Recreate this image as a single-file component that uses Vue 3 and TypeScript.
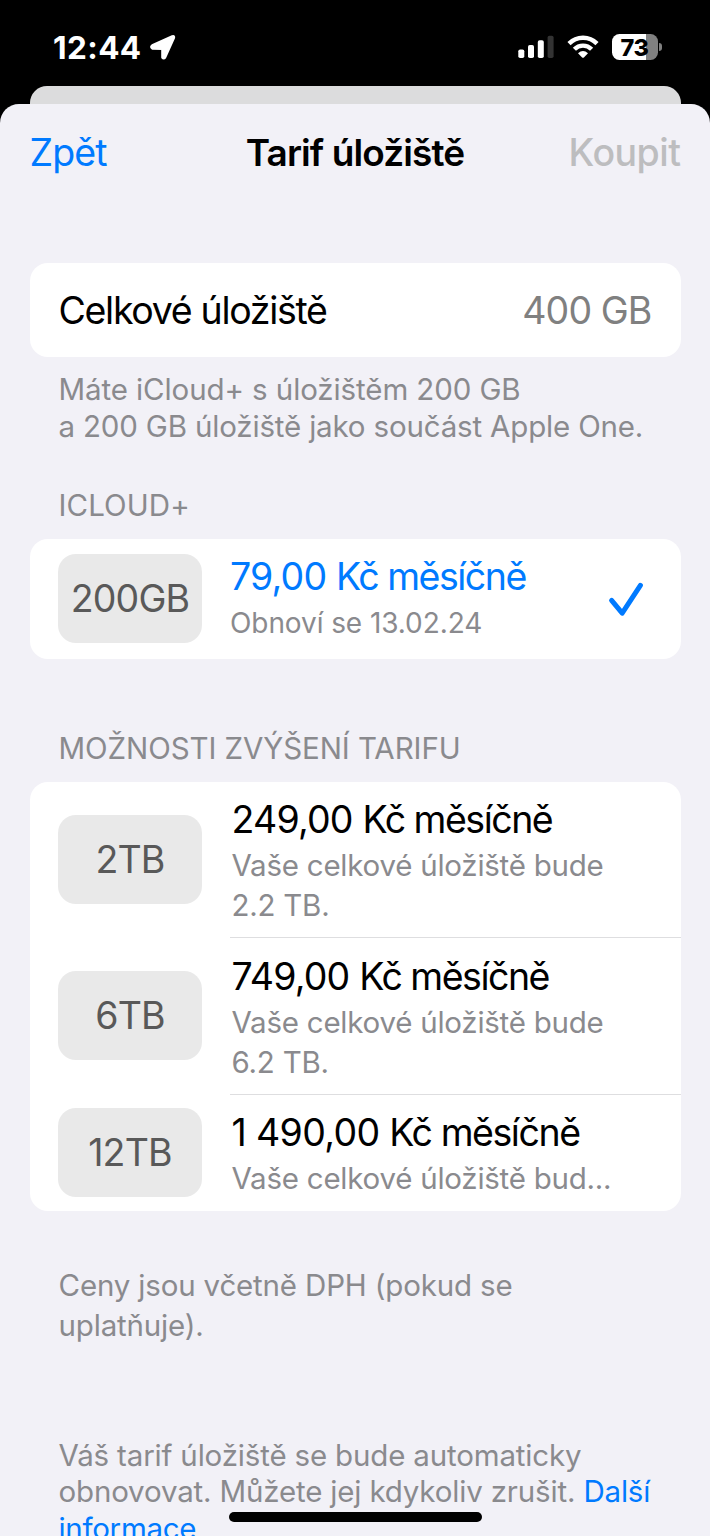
<script setup lang="ts">
interface Plan {
  id: string
  size: string
  amount: string
  lines: string[]
}

const plans: Plan[] = [
  { id: 'tb2', size: '2TB', amount: '249,00', lines: ['Vaše celkové úložiště bude', '2.2 TB.'] },
  { id: 'tb6', size: '6TB', amount: '749,00', lines: ['Vaše celkové úložiště bude', '6.2 TB.'] },
  { id: 'tb12', size: '12TB', amount: '1 490,00', lines: ['Vaše celkové úložiště bud...'] },
]
</script>

<template>
  <div class="screen">
    <div class="status">
      <div class="status-left">
        <span class="time">12:44</span>
        <svg class="location" width="28" height="28" viewBox="0 0 28 28">
          <path d="M3.2 12.2 L23.2 3.2 Q25.9 2.4 25 5.2 L16.2 24.6 Q14.7 26.6 13.2 24.6 L13.2 16 L3.4 15.8 Q0.8 14 3.2 12.2Z" fill="#fff" stroke="#fff" stroke-width="2" stroke-linejoin="round" />
        </svg>
      </div>
      <div class="status-right">
        <svg class="signal" width="36" height="24" viewBox="0 0 36 24">
          <rect x="0.3" y="14.5" width="6" height="8.5" rx="1.8" fill="#fff" />
          <rect x="10" y="10" width="6" height="13" rx="1.8" fill="#fff" />
          <rect x="19.8" y="5.3" width="6" height="17.7" rx="1.8" fill="#fff" />
          <rect x="29.6" y="0.7" width="6" height="22.3" rx="1.8" fill="#333" />
        </svg>
        <svg class="wifi" width="32" height="24" viewBox="0 0 32 24">
          <g fill="none" stroke="#fff" stroke-width="4.4">
            <path d="M2 8.6 A19.6 19.6 0 0 1 30 8.6" />
            <path d="M7.4 14.3 A12 12 0 0 1 24.6 14.3" />
          </g>
          <path d="M11 18.2 Q16 13.8 21 18.2 L16.9 22.5 Q16 23.2 15.1 22.5Z" fill="#fff" />
        </svg>
        <div class="battery">
          <div class="battery-body"><span>73</span></div>
          <div class="battery-cap"></div>
        </div>
      </div>
    </div>

    <div class="back-sheet"></div>

    <main class="sheet">
      <header class="nav">
        <span class="nav-back">Zpět</span>
        <h1 class="nav-title">Tarif úložiště</h1>
        <span class="nav-buy">Koupit</span>
      </header>

      <section class="card total">
        <span class="total-label">Celkové úložiště</span>
        <span class="total-value">400 GB</span>
      </section>

      <p class="note total-note">
        <span class="t-mate">Máte iCloud+ s úložištěm 200 GB</span>
        <span>a 200 GB úložiště jako součást Apple One.</span>
      </p>

      <h2 class="group-title icloud-title">ICLOUD+</h2>
      <section class="card current">
        <div class="chip">200GB</div>
        <div class="current-text">
          <div class="price current-price">79,00 <span class="unit">Kč měsíčně</span></div>
          <div class="renew">Obnoví se 13.02.24</div>
        </div>
        <svg class="check" width="36" height="36" viewBox="0 0 36 36">
          <path d="M3.6 19.4 L14.2 32.2 L32.4 4.4" fill="none" stroke="#007aff" stroke-width="5" stroke-linecap="round" stroke-linejoin="round" />
        </svg>
      </section>

      <h2 class="group-title upgrade-title">MOŽNOSTI ZVÝŠENÍ TARIFU</h2>
      <section class="card plans">
        <div v-for="plan in plans" :key="plan.id" class="plan" :class="plan.id">
          <div class="chip">{{ plan.size }}</div>
          <div class="plan-text">
            <div class="price">{{ plan.amount }} <span class="unit">Kč měsíčně</span></div>
            <div v-for="line in plan.lines" :key="line" class="plan-line">{{ line }}</div>
          </div>
        </div>
      </section>

      <p class="note vat">
        <span>Ceny jsou včetně DPH (pokud se</span>
        <span>uplatňuje).</span>
      </p>

      <p class="note renewal">
        <span>Váš tarif úložiště se bude automaticky</span>
        <span>obnovovat. Můžete jej kdykoliv zrušit. <a>Další</a></span>
        <span class="t-info"><a>informace</a></span>
      </p>
    </main>

    <div class="home-bar"></div>
  </div>
</template>

<style>
html,
body {
  margin: 0;
  background: #000;
  overflow: hidden;
}
</style>

<style scoped>
* {
  box-sizing: border-box;
}

.screen {
  position: relative;
  width: 710px;
  height: 1536px;
  overflow: hidden;
  background: #000;
  font-family: Inter, "Liberation Sans", sans-serif;
  font-size: 37.5px;
  color: #000;
  display: flex;
  flex-direction: column;
}

.status {
  flex: none;
  height: 85.5px;
  padding: 0 48px 0 53px;
  display: flex;
  justify-content: space-between;
  color: #fff;
}

.status-left,
.status-right {
  display: flex;
  align-items: center;
  height: 94px;
}

.time {
  font-size: 31.5px;
  font-weight: 700;
  letter-spacing: 0.4px;
}

.location {
  margin-left: 7.5px;
}

.wifi {
  margin-left: 13px;
}

.battery {
  display: flex;
  align-items: center;
  margin-left: 13px;
}

.battery-body {
  width: 46px;
  height: 26px;
  border-radius: 7.5px;
  background: linear-gradient(to right, #fff 34px, #808080 34px);
  color: #000;
  font-size: 23.5px;
  font-weight: 800;
  letter-spacing: -0.4px;
  line-height: 27px;
  padding-right: 1px;
  text-align: center;
}

.battery-cap {
  width: 3px;
  height: 8px;
  margin-left: 1px;
  border-radius: 0 3px 3px 0;
  background: #808080;
}

.back-sheet {
  flex: none;
  height: 18px;
  margin: 0 29.5px;
  border-radius: 17px 17px 0 0;
  background: #dcdcdd;
}

.sheet {
  flex: 1;
  background: #f2f1f7;
  border-radius: 19px 19px 0 0;
  padding: 0 29.5px;
}

.nav {
  display: grid;
  grid-template-columns: 1fr auto 1fr;
  align-items: center;
  height: 97px;
}

.nav-title {
  margin: 0;
  font-size: 37px;
  font-weight: 600;
  letter-spacing: -0.9px;
}

.nav-back {
  color: #007aff;
  letter-spacing: -0.9px;
}

.nav-buy {
  color: #bdbdbf;
  font-weight: 500;
  letter-spacing: -0.5px;
  text-align: right;
}

.card {
  background: #fff;
  border-radius: 18px;
}

.total {
  margin-top: 62px;
  height: 94px;
  padding: 2px 29px 0;
  display: flex;
  align-items: center;
  justify-content: space-between;
}

.total-label {
  letter-spacing: -1.32px;
}

.total-value {
  color: #808080;
  letter-spacing: -0.9px;
}

.note {
  margin: 0;
  padding-left: 29px;
  font-size: 29.5px;
  letter-spacing: -0.17px;
  color: #8a8a8e;
  white-space: nowrap;
}

.note span {
  display: block;
  line-height: 36.4px;
}

.total-note {
  margin-top: 14.8px;
}

.t-mate {
  letter-spacing: -0.1px;
}

.t-info {
  letter-spacing: -0.3px;
}

.group-title {
  margin: 0;
  padding-left: 29px;
  font-size: 29.5px;
  font-weight: 400;
  line-height: 36px;
  letter-spacing: -0.08px;
  color: #8a8a8e;
}

.icloud-title {
  margin-top: 42.9px;
  letter-spacing: 0.1px;
}

.current {
  margin-top: 16px;
  height: 119.5px;
  padding: 0 37px 0 28.5px;
  display: flex;
  align-items: center;
}

.chip {
  flex: none;
  width: 144px;
  height: 89px;
  border-radius: 18px;
  background: #e9e9e9;
  color: #595959;
  font-size: 37.5px;
  letter-spacing: -0.8px;
  line-height: 90px;
  text-align: center;
}

.current .chip {
  margin-top: -1px;
}

.current-text {
  flex: 1;
  padding: 1.5px 0 0 28px;
}

.price {
  line-height: 46px;
  letter-spacing: -0.8px;
  white-space: nowrap;
}

.unit {
  letter-spacing: -1.5px;
}

.current-price {
  color: #007aff;
}

.renew {
  font-size: 28px;
  line-height: 46px;
  letter-spacing: -0.08px;
  color: #8a8a8e;
}

.upgrade-title {
  margin-top: 71px;
}

.plans {
  margin-top: 16px;
}

.plan {
  display: flex;
  padding-left: 28.5px;
  align-items: center;
  height: 156.5px;
}

.plan .chip {
  margin-top: -1px;
}

.plan.tb12 {
  height: 116.5px;
}

.plan-text {
  flex: 1;
  align-self: stretch;
  margin-left: 27.5px;
  padding: 15.5px 0 0 2px;
  border-bottom: 1px solid #dedee0;
}

.tb12 .plan-text {
  border: 0;
}

.tb12 .price {
  letter-spacing: -0.65px;
}

.tb12 .unit {
  letter-spacing: -1.45px;
}

.plan-line {
  position: relative;
  top: 2px;
  font-size: 29.5px;
  line-height: 40px;
  letter-spacing: -0.24px;
  color: #8a8a8e;
  white-space: nowrap;
}

.vat {
  margin-top: 53.5px;
}

.vat span {
  line-height: 40px;
}

.renewal {
  margin-top: 92.5px;
}

a {
  color: #007aff;
}

.home-bar {
  position: absolute;
  left: 229px;
  top: 1512px;
  width: 253px;
  height: 10px;
  border-radius: 5px;
  background: #000;
}
</style>
